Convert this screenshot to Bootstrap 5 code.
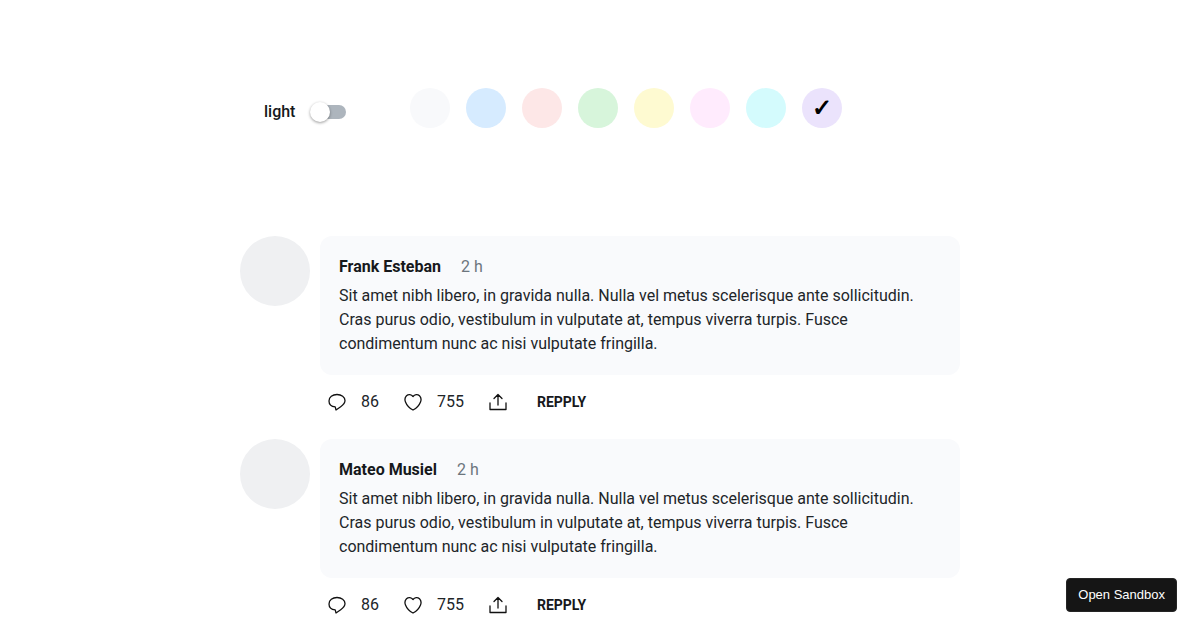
<!DOCTYPE html>
<html lang="en">
<head>
<meta charset="utf-8">
<meta name="viewport" content="width=device-width, initial-scale=1">
<title>Comments</title>
<link href="https://cdn.jsdelivr.net/npm/bootstrap@5.3.0/dist/css/bootstrap.min.css" rel="stylesheet">
<style>
  body { font-family: Roboto, "Liberation Sans", sans-serif; font-size: 16px; line-height: 24px; color: #212529; background: #fff; }
  .page { max-width: 720px; }
  .toolbar { padding: 88px 24px 108px; }
  .theme-label { color: #16181b; width: 46px; }
  .theme-switch { appearance: none; width: 36px; height: 20px; margin: 0; border: 0; background: none; display: flex; align-items: center; cursor: pointer; position: relative; }
  .theme-switch::before { content: ""; width: 34px; height: 14px; margin-left: 2px; border-radius: 7px; background: #adb5bd; }
  .theme-switch::after { content: ""; position: absolute; left: 0; width: 20px; height: 20px; border-radius: 50%; background: #fff; box-shadow: 0 1px 3px rgba(0,0,0,.4); }
  .theme-switch:checked::after { left: 16px; }
  .swatches { margin-left: 64px; }
  .swatch { width: 40px; height: 40px; border-radius: 50%; font: bold 24px/40px Roboto, sans-serif; color: #000; }
  .c-gray { background: #f8f9fb; } .c-blue { background: #d6ebff; } .c-red { background: #fde7e7; } .c-green { background: #d7f5db; }
  .c-yellow { background: #fefad1; } .c-pink { background: #ffebfd; } .c-cyan { background: #d4fbfd; } .c-violet { background: #ebe3fc; }
  .comment { gap: 10px; margin-bottom: 21px; }
  .avatar { width: 70px; height: 70px; background: #eff0f2; }
  .bubble { background: #f9fafc; border-radius: 12px; padding: 19px; }
  .author { font-size: 16px; line-height: 24px; font-weight: 700; color: #16181b; margin-bottom: 5px; }
  .age { color: #6c757d; margin-left: 20px; }
  .actions { padding: 15px 8px 4px; height: 43px; }
  .action { gap: 15px; margin-right: 25px; color: #212529; }
  .action svg { width: 18px; height: 18px; fill: none; stroke: #111; stroke-width: 1.3; stroke-linecap: round; stroke-linejoin: round; }
  .reply { font-size: 14px; font-weight: 700; color: #16181b; margin-left: 5px; }
  .sandbox { right: 23px; bottom: 18px; height: 34px; padding: 0 11px; border: 1px solid #252525; border-radius: 4px; background: #151515; color: #fff; font: 13px/32px "Liberation Sans", sans-serif; z-index: 5; }
</style>
</head>
<body>
<main class="page mx-auto">
  <div class="toolbar d-flex align-items-center">
    <div class="d-flex align-items-center mt-2">
      <label class="theme-label fw-medium" for="theme">light</label>
      <input class="theme-switch" type="checkbox" role="switch" id="theme">
    </div>
    <div class="swatches d-flex gap-3">
      <button type="button" class="swatch border-0 p-0 c-gray" aria-label="Gray"></button>
      <button type="button" class="swatch border-0 p-0 c-blue" aria-label="Blue"></button>
      <button type="button" class="swatch border-0 p-0 c-red" aria-label="Red"></button>
      <button type="button" class="swatch border-0 p-0 c-green" aria-label="Green"></button>
      <button type="button" class="swatch border-0 p-0 c-yellow" aria-label="Yellow"></button>
      <button type="button" class="swatch border-0 p-0 c-pink" aria-label="Pink"></button>
      <button type="button" class="swatch border-0 p-0 c-cyan" aria-label="Cyan"></button>
      <button type="button" class="swatch border-0 p-0 c-violet" aria-label="Violet">✓</button>
    </div>
  </div>

  <article class="comment d-flex align-items-start">
    <div class="avatar rounded-circle flex-shrink-0"></div>
    <div class="flex-grow-1">
      <div class="bubble">
        <div class="d-flex"><h2 class="author">Frank Esteban</h2><span class="age">2 h</span></div>
        <p class="mb-0">Sit amet nibh libero, in gravida nulla. Nulla vel metus scelerisque ante sollicitudin. Cras purus odio, vestibulum in vulputate at, tempus viverra turpis. Fusce condimentum nunc ac nisi vulputate fringilla.</p>
      </div>
      <div class="actions d-flex align-items-center">
        <button type="button" class="action btn border-0 p-0 d-flex align-items-center"><svg viewBox="0 0 18 18"><path d="M7.2 13.9C3.5 13.5 1 11.100 1 7.900 1 4 4.500 1.500 9 1.500s8 2.500 8 6.100c0 2.900-2.100 4.600-4.300 6.100L8 17l-.8-3.100Z"/></svg>86</button>
        <button type="button" class="action btn border-0 p-0 d-flex align-items-center"><svg viewBox="0 0 18 18"><path d="M9 3.500C7.400 1.300 4.400 1 2.500 2.800.7 4.600.7 7 1.500 9c1.200 3.200 4.600 6.500 7.500 8 2.900-1.500 6.300-4.800 7.500-8 .8-2 .8-4.400-1-6.200C13.600 1 10.600 1.300 9 3.500Z"/></svg>755</button>
        <button type="button" class="action btn border-0 p-0 d-flex align-items-center" aria-label="Share"><svg viewBox="0 0 18 18"><path d="M1 10v6.500h16V10M9 12V1.500M5 5.500l4-4 4 4"/></svg></button>
        <button type="button" class="reply btn border-0 p-0">REPPLY</button>
      </div>
    </div>
  </article>

  <article class="comment d-flex align-items-start mb-0">
    <div class="avatar rounded-circle flex-shrink-0"></div>
    <div class="flex-grow-1">
      <div class="bubble">
        <div class="d-flex"><h2 class="author">Mateo Musiel</h2><span class="age">2 h</span></div>
        <p class="mb-0">Sit amet nibh libero, in gravida nulla. Nulla vel metus scelerisque ante sollicitudin. Cras purus odio, vestibulum in vulputate at, tempus viverra turpis. Fusce condimentum nunc ac nisi vulputate fringilla.</p>
      </div>
      <div class="actions d-flex align-items-center">
        <button type="button" class="action btn border-0 p-0 d-flex align-items-center"><svg viewBox="0 0 18 18"><path d="M7.2 13.9C3.5 13.5 1 11.100 1 7.900 1 4 4.500 1.500 9 1.500s8 2.500 8 6.100c0 2.900-2.100 4.600-4.300 6.100L8 17l-.8-3.100Z"/></svg>86</button>
        <button type="button" class="action btn border-0 p-0 d-flex align-items-center"><svg viewBox="0 0 18 18"><path d="M9 3.500C7.400 1.300 4.400 1 2.500 2.800.7 4.600.7 7 1.500 9c1.200 3.200 4.600 6.500 7.500 8 2.900-1.500 6.300-4.800 7.500-8 .8-2 .8-4.400-1-6.200C13.600 1 10.600 1.300 9 3.500Z"/></svg>755</button>
        <button type="button" class="action btn border-0 p-0 d-flex align-items-center" aria-label="Share"><svg viewBox="0 0 18 18"><path d="M1 10v6.500h16V10M9 12V1.500M5 5.500l4-4 4 4"/></svg></button>
        <button type="button" class="reply btn border-0 p-0">REPPLY</button>
      </div>
    </div>
  </article>
</main>
<button type="button" class="sandbox position-fixed">Open Sandbox</button>
<script src="https://cdn.jsdelivr.net/npm/bootstrap@5.3.0/dist/js/bootstrap.bundle.min.js"></script>
</body>
</html>
